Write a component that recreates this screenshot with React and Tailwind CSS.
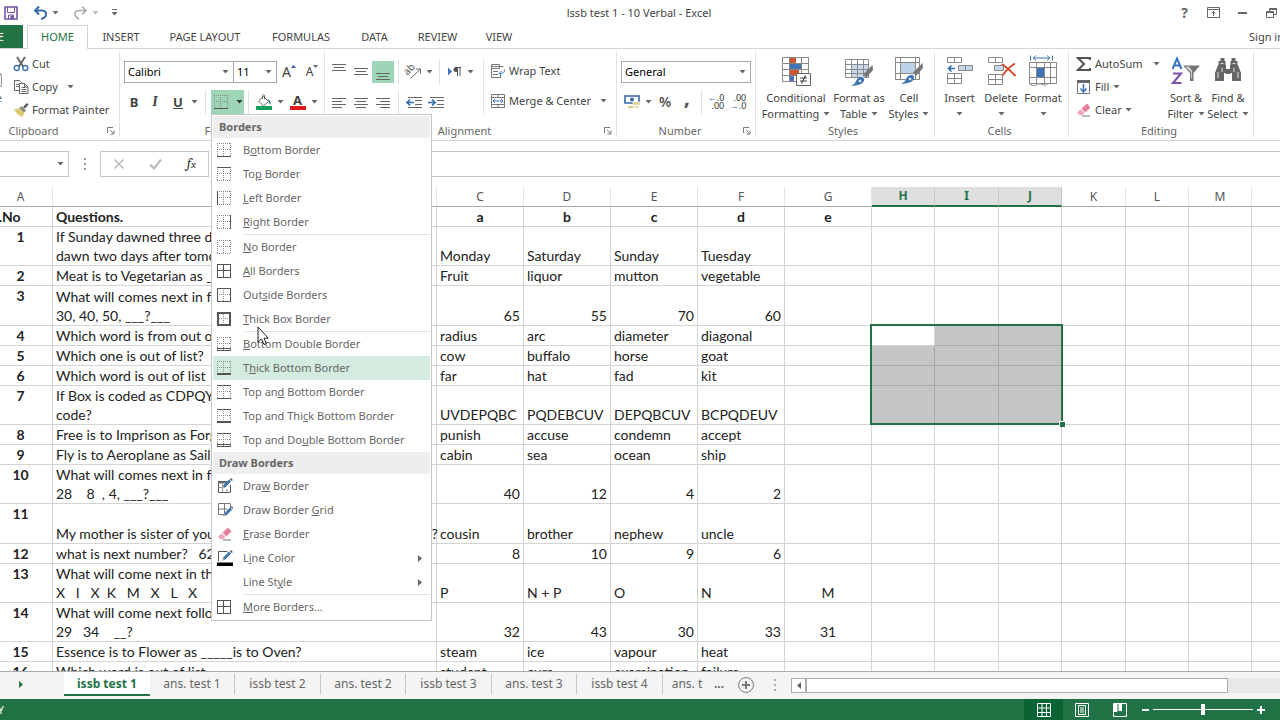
import React, { useState } from 'react';

const TABS = [
    { label: 'INSERT', width: 'w-[66px]' },
    { label: 'PAGE LAYOUT', width: 'w-[102px]' },
    { label: 'FORMULAS', width: 'w-[90px]' },
    { label: 'DATA', width: 'w-[57px]' },
    { label: 'REVIEW', width: 'w-[69px]' },
    { label: 'VIEW', width: 'w-[54px]' },
];

const COLUMNS = [
    { name: 'A', width: 'w-[64px]' },
    { name: 'B', width: 'w-[384px]' },
    { name: 'C', width: 'w-[87px]' },
    { name: 'D', width: 'w-[87px]' },
    { name: 'E', width: 'w-[87px]' },
    { name: 'F', width: 'w-[87px]' },
    { name: 'G', width: 'w-[87px]' },
    { name: 'H', width: 'w-[63px]' },
    { name: 'I', width: 'w-[64px]' },
    { name: 'J', width: 'w-[63px]' },
    { name: 'K', width: 'w-[64px]' },
    { name: 'L', width: 'w-[63px]' },
    { name: 'M', width: 'w-[63px]' },
    { name: '', width: '' },
];

const ROWS = [
    { height: 'h-5', no: 'S.No', question: 'Questions.', answers: ['a', 'b', 'c', 'd', 'e'], heading: true },
    { height: 'h-[39px]', no: '1', question: 'If Sunday dawned three days\ndawn two days after tomorrow?', answers: ['Monday', 'Saturday', 'Sunday', 'Tuesday'] },
    { height: 'h-5', no: '2', question: 'Meat is to Vegetarian as ___', answers: ['Fruit', 'liquor', 'mutton', 'vegetable'] },
    { height: 'h-10', no: '3', question: 'What will comes next in foll?\n30, 40, 50, ___?___', answers: [65, 55, 70, 60] },
    { height: 'h-5', no: '4', question: 'Which word is from out of list', answers: ['radius', 'arc', 'diameter', 'diagonal'] },
    { height: 'h-5', no: '5', question: 'Which one is out of list?', answers: ['cow', 'buffalo', 'horse', 'goat'] },
    { height: 'h-5', no: '6', question: 'Which word is out of list', answers: ['far', 'hat', 'fad', 'kit'] },
    { height: 'h-[39px]', no: '7', question: 'If Box is coded as CDPQYZ\ncode?', answers: ['UVDEPQBC', 'PQDEBCUV', 'DEPQBCUV', 'BCPQDEUV'] },
    { height: 'h-5', no: '8', question: 'Free is to Imprison as Forgive', answers: ['punish', 'accuse', 'condemn', 'accept'] },
    { height: 'h-5', no: '9', question: 'Fly is to Aeroplane as Sail', answers: ['cabin', 'sea', 'ocean', 'ship'] },
    { height: 'h-[39px]', no: '10', question: 'What will comes next in foll?\n28    8  , 4, ___?___', answers: [40, 12, 4, 2] },
    { height: 'h-10', no: '11', question: 'My mother is sister of your brother. What relation am I to you?', answers: ['cousin', 'brother', 'nephew', 'uncle'] },
    { height: 'h-5', no: '12', question: 'what is next number?   62', answers: [8, 10, 9, 6] },
    { height: 'h-[39px]', no: '13', question: 'What will come next in the\nX   I   X  K   M   X   L   X    ____', answers: ['P', 'N + P', 'O', 'N', 'M'] },
    { height: 'h-[39px]', no: '14', question: 'What will come next follow\n29   34    __?', answers: [32, 43, 30, 33, 31] },
    { height: 'h-5', no: '15', question: 'Essence is to Flower as _____is to Oven?', answers: ['steam', 'ice', 'vapour', 'heat'] },
    { height: 'h-5', no: '16', question: 'Which word is out of list', answers: ['student', 'cure', 'examination', 'failure'] },
];

const SELECTED_COLUMNS = ['H', 'I', 'J'];
const SELECTED_ROWS = ['4', '5', '6', '7'];

const MENU = [
    { heading: 'Borders' },
    { label: 'Bottom Border', key: 1, border: { bottom: 'thin' } },
    { label: 'Top Border', key: 2, border: { top: 'thin' } },
    { label: 'Left Border', key: 0, border: { left: true } },
    { label: 'Right Border', key: 0, border: { right: true } },
    { separator: true },
    { label: 'No Border', key: 0, border: {} },
    { label: 'All Borders', key: 0, border: { box: 'thin', inner: true } },
    { label: 'Outside Borders', key: 3, border: { box: 'thin' } },
    { label: 'Thick Box Border', key: 0, border: { box: 'thick' } },
    { separator: true },
    { label: 'Bottom Double Border', key: 0, border: { bottom: 'double' } },
    { label: 'Thick Bottom Border', key: 1, border: { bottom: 'thick' }, active: true },
    { label: 'Top and Bottom Border', key: 6, border: { top: 'thin', bottom: 'thin' } },
    { label: 'Top and Thick Bottom Border', key: 11, border: { top: 'thin', bottom: 'thick' } },
    { label: 'Top and Double Bottom Border', key: 10, border: { top: 'thin', bottom: 'double' } },
    { heading: 'Draw Borders' },
    { label: 'Draw Border', key: 3, icon: 'draw' },
    { label: 'Draw Border Grid', key: 12, icon: 'grid' },
    { label: 'Erase Border', key: 0, icon: 'erase' },
    { label: 'Line Color', key: 1, icon: 'color', submenu: true },
    { label: 'Line Style', key: 7, submenu: true },
    { separator: true },
    { label: 'More Borders...', key: 0, border: { box: 'thin', inner: true } },
];

const SHEETS = ['ans. test 1', 'issb test 2', 'ans. test 2', 'issb test 3', 'ans. test 3', 'issb test 4'];

/* ---------- small shared pieces ---------- */

function Caret({ className = 'text-[#666]' }) {
    return (
        <svg className={`h-1 w-[7px] shrink-0 ${className}`} viewBox="0 0 7 4" fill="currentColor" aria-hidden="true">
            <path d="M0.5 0h6L3.5 3.6z" />
        </svg>
    );
}

function Divider() {
    return <div className="h-6 w-px shrink-0 bg-[#e1e1e1]" />;
}

function Combo({ label, value, className }) {
    return (
        <div className={`relative flex h-[22px] items-center border border-[#ababab] bg-white ${className}`}>
            <select aria-label={label} defaultValue={value} className="h-full w-full appearance-none bg-transparent pl-[3px] text-black outline-none">
                <option>{value}</option>
            </select>
            <span className="pointer-events-none absolute right-1"><Caret /></span>
        </div>
    );
}

function IconButton({ label, width = 'w-[22px]', active, children }) {
    return (
        <button type="button" aria-label={label} className={`flex h-[22px] shrink-0 items-center justify-center gap-[5px] ${width} ${active ? 'bg-[#9fd5b7]' : ''}`}>
            {children}
        </button>
    );
}

function Group({ label, width, launcher, children }) {
    return (
        <section className={`flex shrink-0 flex-col border-r border-[#e1e1e1] ${width}`}>
            <div className="h-[73px]">{children}</div>
            <div className="flex h-3 items-center pr-1">
                <h2 className="flex-1 text-center text-[#666]">{label}</h2>
                {launcher && (
                    <button type="button" aria-label={`${label} settings`}>
                        <svg className="size-2" viewBox="0 0 8 8" fill="none" stroke="#777" aria-hidden="true">
                            <path d="M0.5 6V0.5H6M3 3l3.5 3.5M7 3.5V7H3.5" />
                        </svg>
                    </button>
                )}
            </div>
        </section>
    );
}

function BigButton({ lines, width, icon }) {
    return (
        <button type="button" className={`flex shrink-0 flex-col items-center ${width}`}>
            <span className="flex h-[38px] items-center">{icon}</span>
            <span className="block leading-4">{lines[0]}</span>
            <span className="flex h-4 items-center gap-1 leading-4">{lines[1]}<Caret /></span>
        </button>
    );
}

/* ---------- icons ---------- */

function BorderIcon({ border }) {
    const { top, bottom, left, right, box, inner } = border;
    const thick = box === 'thick';
    return (
        <svg className="size-[14px]" viewBox="0 0 14 14" fill="none" stroke="#555" aria-hidden="true">
            <g stroke="#8a8a8a" strokeDasharray="1 1">
                {!box && <path d="M0.5 0v14M13.5 0v14M0 0.5h14M0 13.5h14" />}
                {!inner && <path d="M6.5 0v14M0 6.5h14" />}
            </g>
            {inner && <path d="M6.5 0v14M0 6.5h14" />}
            {box && <rect x={thick ? 1 : 0.5} y={thick ? 1 : 0.5} width={thick ? 12 : 13} height={thick ? 12 : 13} strokeWidth={thick ? 2 : 1} />}
            {top && <path d="M0 0.5h14" />}
            {left && <path d="M0.5 0v14" />}
            {right && <path d="M13.5 0v14" />}
            {bottom === 'thin' && <path d="M0 13.5h14" />}
            {bottom === 'thick' && <path d="M0 13h14" strokeWidth="2" />}
            {bottom === 'double' && <path d="M0 11.5h14M0 13.5h14" />}
        </svg>
    );
}

function EraserIcon() {
    return (
        <svg className="h-[14px] w-4" viewBox="0 0 16 14" aria-hidden="true">
            <path d="M5.5 5.5L11 0.5l3.5 4L9 9.5z" fill="#e5809b" />
            <path d="M4.8 6.2l3.6 4-2 1.8H3L1 9.6z" fill="#eea7b9" />
            <path d="M6 13h8" stroke="#777" />
        </svg>
    );
}

function PencilIcon({ kind }) {
    return (
        <svg className="size-4" viewBox="0 0 16 16" fill="none" aria-hidden="true">
            {kind === 'draw' && (
                <>
                    <path d="M1.5 3v11.5h12V7M1 3.5h9" stroke="#555" />
                    <path d="M1 3h8v2.5H1z" fill="#666" />
                    <path d="M5.5 6v8M2 9.5h4M10 11v3" stroke="#999" />
                </>
            )}
            {kind === 'grid' && <path d="M1.5 1.5h12v6M1.5 1.5v11h6M7.5 1.5v10M1.5 7h9" stroke="#777" />}
            {kind === 'color' && (
                <>
                    <path d="M1.5 11V1.5h9" stroke="#555" />
                    <path d="M0 12.5h16v3.5H0z" fill="#000" />
                </>
            )}
            <g transform={kind === 'grid' ? 'translate(1 4)' : ''}>
                <path d="M5 10.5l1.2-3L12 1.5l2.2 2-6 6z" fill="#3f74b5" />
                <path d="M12.8 1l1-1 2 2-1 1z" fill="#555" />
                <path d="M5 10.5l1-2.5 1.6 1.6z" fill="#d8c08d" />
            </g>
        </svg>
    );
}

function AlignIcon({ lines, offset = 0 }) {
    return (
        <svg className="h-4 w-[14px]" viewBox="0 0 14 16" stroke="#666" aria-hidden="true">
            {lines.map(([x1, x2], i) => (
                <path key={i} d={`M${x1} ${offset + i * 3 + 0.5}H${x2}`} />
            ))}
        </svg>
    );
}

function IndentIcon({ outward }) {
    return (
        <svg className="h-3 w-4" viewBox="0 0 16 12" fill="none" stroke="#666" aria-hidden="true">
            <path d="M2 0.5h14M9 3.5h7M9 7.5h7M2 10.5h14" />
            <path d={outward ? 'M8 5.5H1M4 2.5l-3 3 3 3' : 'M0 5.5h7M4 2.5l3 3-3 3'} stroke="#2f6cb0" strokeWidth="1.6" />
        </svg>
    );
}

function BrushTip() {
    return (
        <>
            <path d="M28.5 8l-9.500 9.500 3.200 3.200L29 13z" fill="#777" />
            <path d="M18.5 18.5l2.800 2.700-1.300 1.300-2.700-2.700z" fill="#ddd" />
            <path d="M17 20c2 0 3.500 1.500 3 3.500C19.500 27 12 29.500 7 28.500c3-1 4-2.500 5-4.500 1.200-2.500 3-4 5-4z" fill="#3f74b5" />
            <path d="M14.5 24l1.500-1.500 1.500 1.500-1.500 1.500z" fill="#fff" />
        </>
    );
}

function ConditionalIcon() {
    return (
        <svg className="h-8 w-[30px]" viewBox="0 0 30 32" fill="none" aria-hidden="true">
            <path d="M1.5 2.500h26v24h-26zM1.500 8.500h26M1.500 14.500h26M1.500 20.500h26M8.500 2.500v24M20.500 2.500v24" stroke="#888" fill="#fff" />
            <path d="M9 3h6v5H9zM9 15h9v5H9z" fill="#d0552f" />
            <path d="M9 9h11v5H9zM9 21h4v5H9z" fill="#4472b8" />
            <path d="M15.500 18.500h14v12h-14z" fill="#fff" stroke="#666" />
            <path d="M19 23h7M19 26h7M24.500 20.500l-4 8" stroke="#444" strokeWidth="1.2" />
        </svg>
    );
}

function FormatTableIcon() {
    return (
        <svg className="h-8 w-[30px]" viewBox="0 0 30 32" fill="none" aria-hidden="true">
            <path d="M7 10h18v13H7z" fill="#c5d8ec" />
            <path d="M1.500 4.500h23v18h-23zM1.500 9.500h23M1.500 14.500h23M1.500 18.500h23M7.500 4.500v18M13.500 4.500v18M19.500 4.500v18" stroke="#8b8b8b" />
            <g transform="translate(0 2)"><BrushTip /></g>
        </svg>
    );
}

function CellStylesIcon() {
    return (
        <svg className="h-8 w-[30px]" viewBox="0 0 30 32" fill="none" aria-hidden="true">
            <path d="M6 8h15v10H6z" fill="#bdd2ea" />
            <path d="M1.500 2.500h24v22h-24zM1.500 7.500h24M1.500 18.500h24M6.500 2.500v22M21.500 2.500v22" stroke="#888" />
            <BrushTip />
        </svg>
    );
}

function InsertIcon() {
    return (
        <svg className="h-8 w-[30px]" viewBox="0 0 30 32" fill="none" stroke="#888" aria-hidden="true">
            <path d="M2.500 2.500h14v5h-14zM9.500 2.500v5M2.500 18.500h14v10h-14zM2.500 23.500h14M9.500 18.500v10" />
            <path d="M13.500 10.500h14v5h-14zM20.500 10.500v5" fill="#c8d7e8" />
            <path d="M10 13.500H4M6.500 10.500l-3 3 3 3" stroke="#2f6cb0" strokeWidth="1.6" />
        </svg>
    );
}

function DeleteIcon() {
    return (
        <svg className="h-8 w-[30px]" viewBox="0 0 30 32" fill="none" stroke="#888" aria-hidden="true">
            <path d="M2.500 2.500h14v5h-14zM9.500 2.500v5M2.500 19.500h14v10h-14zM2.500 24.500h14M9.500 19.500v10" />
            <path d="M8.500 10.500h9v5h-9z" fill="#c8d7e8" />
            <path d="M16 9c4 3 9 7 13.500 12M29 8.500c-5 3-9 7-12.500 12" stroke="#d2492a" strokeWidth="2" />
        </svg>
    );
}

function FormatCellsIcon() {
    return (
        <svg className="h-8 w-[30px]" viewBox="0 0 30 32" fill="none" stroke="#888" aria-hidden="true">
            <path d="M2.500 0.500v5M24.500 0.500v5M5 3h17M8 0.500L5 3l3 2.500M19 0.500L22 3l-3 2.500" stroke="#3f74b5" />
            <path d="M1.500 7.500h27v21h-27zM1.500 12.500h27M1.500 22.500h27M8.500 7.500v21M16.500 7.500v21M22.500 7.500v21" />
            <path d="M9 13h7v9H9z" fill="#3f74b5" stroke="none" />
            <path d="M1.500 29c4 3 6 1 9 0s6 3 9 0" fill="#fff" />
        </svg>
    );
}

function SortIcon() {
    return (
        <svg className="h-8 w-[30px]" viewBox="0 0 30 32" fill="none" aria-hidden="true">
            <path d="M1.500 14L6 3.500 10.500 14M3 10.500h6" stroke="#3973b8" strokeWidth="2" />
            <path d="M2 18.500h8L2 28h8.500" stroke="#7a52a8" strokeWidth="2" />
            <path d="M12 10.500h17l-6.500 7.500v8h-3.500v-8z" fill="#777" />
            <path d="M14.500 11.800h3.500l3 4v8l-0.800-0.800v-6z" fill="#ddd" />
        </svg>
    );
}

function FindIcon() {
    return (
        <svg className="h-8 w-[30px]" viewBox="0 0 30 32" fill="#666" aria-hidden="true">
            <path d="M7.500 3h4v3h1v5h-7V6h2zM18.500 3h4v3h2v5h-7V6h1z" />
            <path d="M5 10h8v4h4v-4h8l3 8v8h-9v-8h-1.500v1h-5v-1H11v8H2v-8z" />
            <path d="M7.500 8.500h3M19.500 8.500h3M5 17v6M25 17v6M9 13v4M21 13v4" stroke="#ddd" fill="none" />
        </svg>
    );
}

/* ---------- window parts ---------- */

function TitleBar() {
    return (
        <header className="flex h-[25px] shrink-0 items-center">
            <div className="flex w-[160px] items-center pl-11 text-[#666]">
                <button type="button" aria-label="Save">
                    <svg className="size-[14px]" viewBox="0 0 14 14" fill="none" stroke="#7454a6" aria-hidden="true">
                        <path d="M1 1h12v12H1z" strokeWidth="1.6" />
                        <path d="M3.500 1v5.500h7V1M4.500 13V9h5v4" />
                        <path d="M7 10h2v3H7z" fill="#7454a6" />
                    </svg>
                </button>
                <button type="button" aria-label="Undo" className="ml-[15px] flex items-center gap-1">
                    <svg className="h-[14px] w-[15px]" viewBox="0 0 15 14" fill="none" stroke="#3568a8" strokeWidth="2" aria-hidden="true">
                        <path d="M6 0.500L2 4.500l4 4M2 4.500h7c3 0 4.500 2 4 4.500-0.500 2-2.500 3.500-5 4" />
                    </svg>
                    <Caret />
                </button>
                <button type="button" aria-label="Redo" className="ml-[14px] flex items-center gap-1">
                    <svg className="h-[14px] w-[15px]" viewBox="0 0 15 14" fill="none" stroke="#aaa" strokeWidth="1.6" aria-hidden="true">
                        <path d="M9 0.500l4 4-4 4M13 4.500H6c-3 0-4.500 2-4 4.500 0.500 2 2 3 4 4" />
                    </svg>
                    <Caret className="text-[#bbb]" />
                </button>
                <button type="button" aria-label="Customize toolbar" className="ml-3 flex flex-col items-center gap-0.5">
                    <span className="h-px w-[5px] bg-[#666]" />
                    <Caret />
                </button>
            </div>
            <h1 className="flex-1 text-center text-[#444]">lssb test 1 - 10 Verbal - Excel</h1>
            <div className="flex w-[146px] items-center pl-3 text-[#666]">
                <button type="button" aria-label="Help" className="w-[29px] text-sm font-bold leading-5">?</button>
                <button type="button" aria-label="Ribbon display options" className="flex w-[29px] justify-center">
                    <svg className="h-[11px] w-[13px]" viewBox="0 0 13 11" fill="none" stroke="#666" aria-hidden="true">
                        <path d="M0.500 0.500h12v10h-12zM0.500 2.500h12M6.500 9V4.500M4.500 6.500l2-2 2 2" />
                    </svg>
                </button>
                <button type="button" aria-label="Minimize" className="flex w-[29px] justify-center">
                    <span className="h-0.5 w-[9px] bg-[#666]" />
                </button>
                <button type="button" aria-label="Restore" className="flex w-[29px] justify-center">
                    <svg className="h-[10px] w-[11px]" viewBox="0 0 11 10" fill="none" stroke="#666" aria-hidden="true">
                        <path d="M0.500 3.500h7v6h-7zM0.500 4.500h7M3.500 3V0.500h7v6H8M3.500 1.500h7" />
                    </svg>
                </button>
            </div>
        </header>
    );
}

function RibbonTabs() {
    return (
        <nav className="flex h-6 shrink-0 items-stretch border-b border-[#d4d4d4] text-[#444]">
            <button type="button" className="w-[63px] bg-[#217346] pr-[19px] text-right text-white">FILE</button>
            <button type="button" className="-mb-px ml-1 w-[61px] border border-b-0 border-[#d4d4d4] bg-white pb-0.5 text-[#217346]">HOME</button>
            {TABS.map(tab => (
                <button key={tab.label} type="button" className={tab.width}>{tab.label}</button>
            ))}
            <a href="#signin" className="ml-auto w-[55px] self-center">Sign in</a>
        </nav>
    );
}

function ClipboardGroup() {
    return (
        <Group label="Clipboard" width="w-[160px]" launcher>
            <div className="flex h-full">
                <button type="button" className="flex w-[46px] flex-col items-end pt-1 text-[#666]">
                    <svg className="h-[34px] w-6" viewBox="0 0 24 34" fill="none" stroke="#999" aria-hidden="true">
                        <path d="M0.500 12.500h13l6 6v12h-19z" fill="#f6f0f6" />
                        <path d="M13.500 12.500v6h6" />
                    </svg>
                    <span className="pr-1">Paste</span>
                </button>
                <div className="flex flex-col pl-[7px]">
                    <button type="button" className="flex h-[23px] items-center gap-[3px]">
                        <svg className="size-4" viewBox="0 0 16 16" fill="none" strokeWidth="1.4" aria-hidden="true">
                            <path d="M4 1l6.500 10M12 1L5.500 11" stroke="#666" strokeWidth="2" />
                            <circle cx="3.700" cy="12" r="2.500" stroke="#3f74b5" />
                            <circle cx="12.300" cy="12" r="2.500" stroke="#3f74b5" />
                        </svg>
                        Cut
                    </button>
                    <button type="button" className="flex h-[23px] items-center gap-[3px]">
                        <svg className="size-4" viewBox="0 0 16 16" fill="#fff" stroke="#666" aria-hidden="true">
                            <path d="M1.500 1.500h5l2 2v8h-7zM3 5.500h3M3 7.500h3" />
                            <path d="M6.500 4.500h5l3.500 3.500v6.500H6.500zM8.500 8.500h4M8.500 10.500h5M8.500 12.500h5M11.500 4.500V8H15" />
                        </svg>
                        Copy
                        <span className="pl-[6px]"><Caret /></span>
                    </button>
                    <button type="button" className="flex h-[23px] items-center gap-[3px]">
                        <svg className="size-4" viewBox="0 0 16 16" aria-hidden="true">
                            <path d="M1 7.500l6-1.500 4.500 4.500-2 4.500C6 14.500 3 11 1 7.500z" fill="#dccb74" />
                            <path d="M6.500 6l2-2 4.500 4.500-2 2z" fill="#888" />
                            <path d="M10 5l4-4 1.500 1.500-3.500 4z" fill="#555" />
                        </svg>
                        Format Painter
                    </button>
                </div>
            </div>
        </Group>
    );
}

function BordersMenu() {
    return (
        <div role="menu" className="absolute left-0 top-full z-10 w-[221px] border border-[#c6c6c6] bg-white p-px text-left text-[#666]">
            {MENU.map((item, i) => {
                if (item.separator) return <div key={i} className="ml-8 h-px bg-[#e1e1e1]" />;
                if (item.heading) {
                    return <div key={i} className="flex h-[22px] items-center bg-[#eeeeee] pl-[6px] font-bold">{item.heading}</div>;
                }
                return (
                    <button key={i} type="button" role="menuitem" className={`flex h-6 w-full items-center pl-1 pr-2 ${item.active ? 'bg-[#d3ecdf]' : ''}`}>
                        <span className="flex w-[26px] items-center">
                            {item.border && <BorderIcon border={item.border} />}
                            {item.icon === 'erase' && <EraserIcon />}
                            {item.icon && item.icon !== 'erase' && <PencilIcon kind={item.icon} />}
                        </span>
                        <span className="whitespace-pre">
                            {item.label.slice(0, item.key)}<u>{item.label[item.key]}</u>{item.label.slice(item.key + 1)}
                        </span>
                        {item.submenu && (
                            <svg className="ml-auto h-[7px] w-1" viewBox="0 0 4 7" fill="#666" aria-hidden="true"><path d="M0 0l4 3.500-4 3.500z" /></svg>
                        )}
                    </button>
                );
            })}
            {/* mouse pointer */}
            <svg className="absolute left-[45px] top-[211px] h-5 w-3" viewBox="0 0 12 20" fill="#fff" stroke="#222" aria-hidden="true">
                <path d="M1 1v15l3.500-3 2.500 5.500 2.300-1L7 12.200h4.300z" />
            </svg>
        </div>
    );
}

function FontGroup() {
    const [open, setOpen] = useState(true);
    return (
        <Group label="Font" width="w-[205px]" launcher>
            <div className="flex flex-col gap-2 pl-1 pt-[9px]">
                <div className="flex items-center">
                    <Combo label="Font" value="Calibri" className="w-[110px]" />
                    <Combo label="Font size" value="11" className="w-[43px] border-l-0" />
                    <button type="button" aria-label="Increase font size" className="flex h-[22px] w-6 justify-center text-sm leading-[22px]">
                        A
                        <svg className="mt-1 h-[3px] w-[5px]" viewBox="0 0 5 3" fill="#3f57b5" aria-hidden="true"><path d="M0 3L2.500 0 5 3z" /></svg>
                    </button>
                    <button type="button" aria-label="Decrease font size" className="flex h-[22px] w-[22px] justify-center text-xs leading-[22px]">
                        A
                        <svg className="mt-1 h-[3px] w-[5px]" viewBox="0 0 5 3" fill="#666" aria-hidden="true"><path d="M0 0h5L2.500 3z" /></svg>
                    </button>
                </div>
                <div className="flex h-[22px] items-center">
                    <IconButton label="Bold" width="w-5"><b className="text-[13px]">B</b></IconButton>
                    <IconButton label="Italic"><i className="font-serif text-sm font-bold">I</i></IconButton>
                    <IconButton label="Underline" width="w-[39px]"><b className="text-[13px] underline">U</b><span className="pl-[3px]"><Caret /></span></IconButton>
                    <Divider />
                    <div className="relative ml-[5px]">
                        <button type="button" aria-label="Borders" aria-expanded={open} onClick={() => setOpen(!open)}
                            className="flex h-6 w-[33px] items-center gap-2 bg-[#9fd5b7] pl-[3px]">
                            <BorderIcon border={{ bottom: 'thin' }} />
                            <Caret className="text-[#333]" />
                        </button>
                        {open && <BordersMenu />}
                    </div>
                    <span className="pl-1"><Divider /></span>
                    <IconButton label="Fill color" width="w-[41px]">
                        <svg className="size-4" viewBox="0 0 16 16" fill="none" stroke="#666" aria-hidden="true">
                            <path d="M7.500 2.500l5 5-5 4.500-5-5zM6.500 5V1.500c0-1 2-1 2 0V5" fill="#fff" />
                            <path d="M12 5c2 1 3 3 2.500 6-1-1-2-2-2-4z" fill="#3a7c8c" stroke="none" />
                            <path d="M0 12h16v4H0z" fill="#12a05c" stroke="none" />
                        </svg>
                        <Caret />
                    </IconButton>
                    <IconButton label="Font color" width="w-[27px]">
                        <span className="flex w-4 flex-col items-center">
                            <span className="text-[13px] font-bold leading-3">A</span>
                            <span className="h-1 w-4 bg-[#e01b1b]" />
                        </span>
                        <Caret />
                    </IconButton>
                </div>
            </div>
        </Group>
    );
}

function AlignmentGroup() {
    return (
        <Group label="Alignment" width="w-[292px]" launcher>
            <div className="flex gap-px pl-[3px] pt-2">
                <div className="flex flex-col gap-2">
                    <div className="flex items-center">
                        <IconButton label="Top align"><AlignIcon lines={[[0, 14], [2, 12], [0, 14]]} /></IconButton>
                        <IconButton label="Middle align"><AlignIcon lines={[[0, 14], [2, 12], [0, 14]]} offset={4} /></IconButton>
                        <IconButton label="Bottom align" active><AlignIcon lines={[[0, 14], [2, 12], [0, 14]]} offset={9} /></IconButton>
                        <span className="pl-1"><Divider /></span>
                        <IconButton label="Orientation" width="w-10">
                            <svg className="size-4 overflow-visible" viewBox="0 0 16 16" fill="none" stroke="#666" aria-hidden="true">
                                <text x="-1" y="8" fontSize="10" fill="#555" stroke="none" transform="rotate(-45 5 6)">ab</text>
                                <path d="M5.500 14.500L15 5.500M11 5H15.500V9.500" />
                            </svg>
                            <Caret />
                        </IconButton>
                        <Divider />
                        <IconButton label="Text direction" width="w-[42px]">
                            <svg className="h-3 w-[14px]" viewBox="0 0 14 12" aria-hidden="true">
                                <path d="M0 1.500l4 4-4 4z" fill="#3f74b5" />
                                <path d="M9 1.500H13M9.500 1v9M12 1v9" stroke="#555" fill="none" />
                                <path d="M9.500 1H8a2.500 2.500 0 0 0 0 5h1.500z" fill="#555" />
                            </svg>
                            <Caret />
                        </IconButton>
                    </div>
                    <div className="flex h-[22px] items-center">
                        <IconButton label="Align left"><AlignIcon lines={[[0, 14], [0, 10], [0, 14], [0, 10]]} offset={3} /></IconButton>
                        <IconButton label="Center"><AlignIcon lines={[[0, 14], [2, 12], [0, 14], [2, 12]]} offset={3} /></IconButton>
                        <IconButton label="Align right"><AlignIcon lines={[[0, 14], [4, 14], [0, 14], [4, 14]]} offset={3} /></IconButton>
                        <span className="pl-1 pr-1"><Divider /></span>
                        <IconButton label="Decrease indent"><IndentIcon outward /></IconButton>
                        <IconButton label="Increase indent"><IndentIcon /></IconButton>
                    </div>
                </div>
                <div className="flex flex-col gap-2 border-l border-[#e1e1e1] pl-[6px]">
                    <button type="button" className="flex h-[22px] items-center gap-[3px]">
                        <svg className="size-4" viewBox="0 0 16 16" fill="none" stroke="#777" aria-hidden="true">
                            <path d="M1.500 1.500h8v4h-8zM1.500 3.500h12M1.500 5.500v9h9v-3M3 8.500h5M3 11.500h5" />
                            <path d="M14.500 6.500c0 3-1 4-5 4M11.500 8l-2.500 2.500 2.500 2.500" stroke="#3f74b5" />
                        </svg>
                        Wrap Text
                    </button>
                    <button type="button" className="flex h-[22px] items-center gap-[3px]">
                        <svg className="size-4" viewBox="0 0 16 16" fill="none" stroke="#777" aria-hidden="true">
                            <path d="M1.500 1.500h13v13h-13zM1.500 4.500h13M1.500 11.500h13M8 1.500v3M8 11.500v3" />
                            <path d="M3 8h10M5 6L3 8l2 2M11 6l2 2-2 2" stroke="#3f74b5" />
                        </svg>
                        Merge &amp; Center
                        <span className="pl-[6px]"><Caret /></span>
                    </button>
                </div>
            </div>
        </Group>
    );
}

function NumberGroup() {
    return (
        <Group label="Number" width="w-[139px]" launcher>
            <div className="flex flex-col gap-2 px-1 pt-[9px]">
                <Combo label="Number format" value="General" className="w-[130px]" />
                <div className="flex h-[22px] items-center">
                    <IconButton label="Accounting format" width="w-[33px]">
                        <svg className="h-4 w-4" viewBox="0 0 16 16" fill="none" aria-hidden="true">
                            <path d="M1 2h14v7H1z" stroke="#3568a8" strokeWidth="1.6" />
                            <circle cx="8" cy="5.500" r="2" fill="#3568a8" />
                            <path d="M9 8h7v3H9zM4 11.500h7v3H4zM9 12h6v2H9z" fill="#d8c98a" stroke="#fff" strokeWidth="0.6" />
                        </svg>
                        <Caret />
                    </IconButton>
                    <IconButton label="Percent style"><span className="text-sm font-semibold text-[#555]">%</span></IconButton>
                    <IconButton label="Comma style"><span className="pb-3 text-[22px] font-bold leading-5 text-[#555]">,</span></IconButton>
                    <span className="px-[3px]"><Divider /></span>
                    <IconButton label="Increase decimal">
                        <span className="text-right text-[9px] leading-[8px] text-[#333]"><span className="text-[#3568a8]">←</span>.0<br />.00</span>
                    </IconButton>
                    <IconButton label="Decrease decimal">
                        <span className="text-right text-[9px] leading-[8px] text-[#333]">.00<br /><span className="text-[#3568a8]">→</span>.0</span>
                    </IconButton>
                </div>
            </div>
        </Group>
    );
}

function Ribbon() {
    return (
        <div className="flex h-[92px] shrink-0 border-b border-[#d4d4d4] py-[3px] text-[#444]">
            <ClipboardGroup />
            <FontGroup />
            <AlignmentGroup />
            <NumberGroup />
            <Group label="Styles" width="w-[179px]">
                <div className="flex pl-[5px]">
                    <BigButton width="w-[70px]" lines={['Conditional', 'Formatting']} icon={<ConditionalIcon />} />
                    <BigButton width="w-[56px]" lines={['Format as', 'Table']} icon={<FormatTableIcon />} />
                    <BigButton width="w-[44px]" lines={['Cell', 'Styles']} icon={<CellStylesIcon />} />
                </div>
            </Group>
            <Group label="Cells" width="w-[134px]">
                <div className="flex pl-[4px]">
                    <BigButton width="w-[41px]" lines={['Insert', '']} icon={<InsertIcon />} />
                    <BigButton width="w-[42px]" lines={['Delete', '']} icon={<DeleteIcon />} />
                    <BigButton width="w-[42px]" lines={['Format', '']} icon={<FormatCellsIcon />} />
                </div>
            </Group>
            <Group label="Editing" width="w-[185px]">
                <div className="flex pl-[7px]">
                    <div className="flex w-[89px] flex-col">
                        <button type="button" className="flex h-[23px] items-center gap-1">
                            <svg className="h-4 w-[15px]" viewBox="0 0 15 16" fill="none" stroke="#555" strokeWidth="2" aria-hidden="true">
                                <path d="M14 4V2H2l6 6-6 6h12v-2" />
                            </svg>
                            AutoSum
                            <span className="pl-[6px]"><Caret /></span>
                        </button>
                        <button type="button" className="flex h-[23px] items-center gap-1">
                            <svg className="h-4 w-[15px]" viewBox="0 0 15 16" fill="none" stroke="#777" aria-hidden="true">
                                <path d="M1.500 1.500h12v13h-12z" />
                                <path d="M1 1h13v3H1z" fill="#666" stroke="none" />
                                <path d="M7.500 5v8M4.500 9.500l3 3.500 3-3.500" stroke="#3f74b5" strokeWidth="1.6" />
                            </svg>
                            Fill
                            <Caret />
                        </button>
                        <button type="button" className="flex h-[23px] items-center gap-[3px]">
                            <EraserIcon />
                            Clear
                            <Caret />
                        </button>
                    </div>
                    <BigButton width="w-[42px]" lines={['Sort &', 'Filter']} icon={<SortIcon />} />
                    <BigButton width="w-[42px]" lines={['Find &', 'Select']} icon={<FindIcon />} />
                </div>
            </Group>
        </div>
    );
}

function FormulaBar() {
    return (
        <div className="flex h-[46px] shrink-0 items-center pb-px">
            <div className="flex h-[26px] w-[109px] items-center border border-[#c6c6c6] pr-1">
                <input aria-label="Name box" className="w-full min-w-0 outline-none" />
                <Caret />
            </div>
            <div className="flex w-[31px] flex-col items-center gap-[3px]">
                <span className="size-0.5 bg-[#999]" />
                <span className="size-0.5 bg-[#999]" />
                <span className="size-0.5 bg-[#999]" />
            </div>
            <div className="flex h-[26px] w-[109px] items-center justify-between border border-[#c6c6c6] px-3">
                <button type="button" aria-label="Cancel">
                    <svg className="size-3" viewBox="0 0 12 12" stroke="#bbb" strokeWidth="1.6" aria-hidden="true"><path d="M1.500 1.500l9 9M10.500 1.500l-9 9" /></svg>
                </button>
                <button type="button" aria-label="Enter">
                    <svg className="h-3 w-[13px]" viewBox="0 0 13 12" fill="none" stroke="#bbb" strokeWidth="2.2" aria-hidden="true"><path d="M1 6.500l4 4L12 1.500" /></svg>
                </button>
                <button type="button" aria-label="Insert function" className="font-serif text-[15px] italic leading-5 text-[#444]">f<span className="text-[11px]">x</span></button>
            </div>
            <input aria-label="Formula" className="ml-[3px] h-[26px] flex-1 border border-[#c6c6c6] outline-none" />
        </div>
    );
}

function Cell({ row, col, children, className = '' }) {
    const selected = SELECTED_COLUMNS.includes(col) && SELECTED_ROWS.includes(row.no);
    const active = selected && col === 'H' && row.no === '4';
    return (
        <td className={`border-b border-r px-[3px] py-0 align-bottom ${selected && !active ? 'border-[#a8a8a8] bg-[#c5c5c5]' : 'border-[#d4d4d4]'} ${active ? 'relative' : ''} ${className}`}>
            {children}
            {active && (
                <div className="pointer-events-none absolute -left-0.5 -top-0.5 h-[101px] w-[193px] border-2 border-[#217346]">
                    <span className="absolute -bottom-1 -right-1 size-[6px] border-l border-t border-white bg-[#217346]" />
                </div>
            )}
        </td>
    );
}

function Sheet() {
    return (
        <main className="min-h-0 flex-1 overflow-hidden">
            <table className="w-full table-fixed border-separate border-spacing-0 whitespace-pre text-left text-sm leading-[19px] text-[#222] [font-family:Lato,Carlito,sans-serif]">
                <colgroup>
                    <col className="w-[29px]" />
                    {COLUMNS.map((col, i) => <col key={i} className={col.width} />)}
                </colgroup>
                <thead>
                    <tr className="h-5 [font-family:'Noto_Sans',sans-serif] text-xs leading-[18px] text-[#555]">
                        <td className="border-b border-[#ababab]" />
                        {COLUMNS.map((col, i) => {
                            const selected = SELECTED_COLUMNS.includes(col.name);
                            return (
                                <th key={i} scope="col" className={`border-r p-0 text-center ${selected ? 'border-b-2 border-b-[#217346] border-r-[#c6c6c6] bg-[#dfdfdf] font-bold text-[#217346]' : 'border-b border-b-[#ababab] border-r-[#e4e4e4] font-normal'}`}>
                                    {col.name}
                                </th>
                            );
                        })}
                    </tr>
                </thead>
                <tbody>
                    {ROWS.map(row => (
                        <tr key={row.no} className={`${row.height} ${row.heading ? 'font-bold' : ''}`}>
                            <td />
                            <td className={`border-b border-r border-[#d4d4d4] px-0.5 py-0 align-top font-bold ${row.heading ? '' : 'text-center'}`}>{row.no}</td>
                            <Cell row={row} col="B">{row.question}</Cell>
                            {['C', 'D', 'E', 'F', 'G'].map((col, i) => {
                                const value = row.answers[i];
                                const align = row.heading || col === 'G' ? 'text-center' : typeof value === 'number' ? 'text-right' : '';
                                return <Cell key={col} row={row} col={col} className={align}>{value}</Cell>;
                            })}
                            {['H', 'I', 'J', 'K', 'L', 'M', 'N'].map(col => <Cell key={col} row={row} col={col} />)}
                        </tr>
                    ))}
                </tbody>
            </table>
        </main>
    );
}

function SheetTabs() {
    return (
        <div className="flex h-7 shrink-0 items-start border-t border-[#ababab] bg-[#f4f4f4] text-xs text-[#666]">
            <button type="button" aria-label="Next sheet" className="flex h-[25px] w-[104px] items-center pl-[59px]">
                <svg className="h-[7px] w-1" viewBox="0 0 4 7" fill="#217346" aria-hidden="true"><path d="M0 0l4 3.500-4 3.500z" /></svg>
            </button>
            <button type="button" className="h-6 w-[86px] border-b-2 border-[#217346] bg-white pt-0.5 font-bold text-[#217346]">issb test 1</button>
            {SHEETS.map((name, i) => (
                <button key={name} type="button" className={`my-0.5 h-5 border-r border-[#c6c6c6] ${i % 2 ? 'w-[86px]' : 'w-[85px]'}`}>{name}</button>
            ))}
            <button type="button" className="my-0.5 h-5 w-12">ans. t</button>
            <button type="button" aria-label="More sheets" className="my-0.5 h-5 w-4 font-bold">...</button>
            <button type="button" aria-label="New sheet" className="ml-[11px] mt-[5px]">
                <svg className="size-4" viewBox="0 0 16 16" fill="none" stroke="#777" aria-hidden="true">
                    <circle cx="8" cy="8" r="7.400" />
                    <path d="M8 4v8M4 8h8" strokeWidth="2" />
                </svg>
            </button>
            <div className="flex h-[25px] w-[37px] flex-col items-center justify-center gap-[3px] pl-1">
                <span className="size-0.5 bg-[#aaa]" />
                <span className="size-0.5 bg-[#aaa]" />
                <span className="size-0.5 bg-[#aaa]" />
            </div>
            <div className="mt-[6px] flex h-[15px] flex-1 bg-[#e8e8e8]">
                <button type="button" aria-label="Scroll left" className="flex w-[15px] items-center justify-center border border-[#ababab] bg-white">
                    <svg className="h-[7px] w-1" viewBox="0 0 4 7" fill="#666" aria-hidden="true"><path d="M4 0L0 3.500 4 7z" /></svg>
                </button>
                <div className="w-[422px] border border-[#ababab] bg-white" />
            </div>
        </div>
    );
}

function StatusBar() {
    return (
        <footer className="flex h-[21px] shrink-0 items-center bg-[#217346] text-[11px] text-white">
            <span className="flex w-[44px] justify-end">READY</span>
            <div className="ml-auto flex h-full items-center">
                <button type="button" aria-label="Normal view" className="flex h-full w-[39px] items-center justify-center bg-[#0a6332]">
                    <svg className="size-[14px]" viewBox="0 0 14 14" fill="none" stroke="#fff" aria-hidden="true"><path d="M0.500 0.500h13v13h-13zM0.500 5h13M0.500 9.500h13M5 0.500v13M9.500 0.500v13" /></svg>
                </button>
                <button type="button" aria-label="Page layout view" className="flex w-[38px] justify-center">
                    <svg className="size-[14px]" viewBox="0 0 14 14" fill="none" stroke="#fff" aria-hidden="true"><path d="M0.500 0.500h13v13h-13zM3.500 2.500h7v9h-7zM5 5h4M5 7h4M5 9h4" /></svg>
                </button>
                <button type="button" aria-label="Page break view" className="flex w-[37px] justify-center">
                    <svg className="size-[14px]" viewBox="0 0 14 14" fill="none" stroke="#fff" aria-hidden="true">
                        <path d="M0.500 0.500h13v13h-13z" />
                        <path d="M1 1h3.500v8H1zM5.500 1h3.500v7H5.500z" fill="#fff" stroke="none" />
                    </svg>
                </button>
                <button type="button" aria-label="Zoom out" className="flex w-[15px] justify-center"><span className="h-0.5 w-[7px] bg-white" /></button>
                <input type="range" aria-label="Zoom" min="0" max="100" defaultValue="50"
                    className="h-3 w-[100px] appearance-none bg-transparent bg-[linear-gradient(#fff,#fff)] bg-[length:100%_1px] bg-center bg-no-repeat [&::-webkit-slider-thumb]:h-[11px] [&::-webkit-slider-thumb]:w-1 [&::-webkit-slider-thumb]:appearance-none [&::-webkit-slider-thumb]:bg-white" />
                <button type="button" aria-label="Zoom in" className="mr-9 flex w-[15px] justify-center">
                    <svg className="size-2" viewBox="0 0 8 8" stroke="#fff" strokeWidth="2" aria-hidden="true"><path d="M4 0v8M0 4h8" /></svg>
                </button>
            </div>
        </footer>
    );
}

function App() {
    return (
        <div className="h-screen overflow-hidden bg-white">
            {/* the window hangs over both screen edges */}
            <div className="-ml-10 -mr-6 flex h-full flex-col whitespace-nowrap text-[11px] leading-4 [font-family:'Noto_Sans','Open_Sans',sans-serif]">
                <TitleBar />
                <RibbonTabs />
                <Ribbon />
                <FormulaBar />
                <Sheet />
                <SheetTabs />
                <StatusBar />
            </div>
        </div>
    );
}

export default App;
